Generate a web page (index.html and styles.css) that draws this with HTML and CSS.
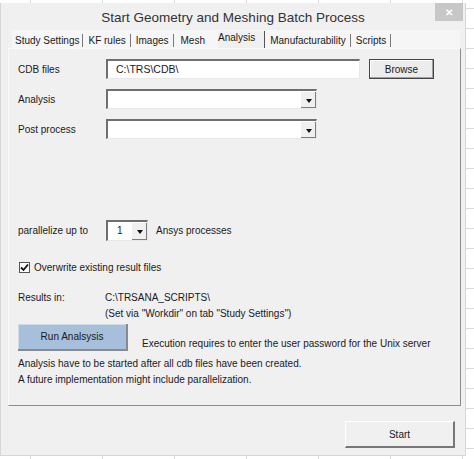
FILE: index.html
```html
<!DOCTYPE html>
<html lang="en">
<head>
    <meta charset="UTF-8">
    <title>Start Geometry and Meshing Batch Process</title>
    <link rel="stylesheet" href="styles.css">
</head>
<body>
    <div class="dialog">
        <div class="titlebar">
            <span></span>
            <span class="title">Start Geometry and Meshing Batch Process</span>
            <span class="close-wrap"><span class="close">&#x2715;</span></span>
        </div>
        <div class="tabs">
            <span class="tab">Study Settings</span>
            <span class="tab">KF rules</span>
            <span class="tab">Images</span>
            <span class="tab before-active">Mesh</span>
            <span class="tab active">Analysis</span>
            <span class="tab">Manufacturability</span>
            <span class="tab">Scripts</span>
        </div>
        <div class="page">
            <div class="row">
                <label class="lbl">CDB files</label>
                <div class="textbox">C:\TRS\CDB\</div>
                <button class="btn browse">Browse</button>
            </div>
            <div class="row gap">
                <label class="lbl">Analysis</label>
                <div class="combo wide"><span class="value"></span><span class="drop"></span></div>
            </div>
            <div class="row gap">
                <label class="lbl">Post process</label>
                <div class="combo wide"><span class="value"></span><span class="drop"></span></div>
            </div>
            <div class="row parallel">
                <label class="lbl">parallelize up to</label>
                <div class="combo small"><span class="value">1</span><span class="drop"></span></div>
                <span class="after">Ansys processes</span>
            </div>
            <div class="row check-row">
                <span class="checkbox">
                    <svg width="9" height="9" viewBox="0 0 9 9"><path d="M1 4.5 L3.5 7 L8 1.5" fill="none" stroke="#111" stroke-width="1.8"/></svg>
                </span>
                <span>Overwrite existing result files</span>
            </div>
            <div class="results">
                <span class="lbl">Results in:</span>
                <div class="paths">
                    <div>C:\TRSANA_SCRIPTS\</div>
                    <div>(Set via "Workdir" on tab "Study Settings")</div>
                </div>
            </div>
            <div class="run-row">
                <button class="btn run">Run Analsysis</button>
                <span class="hint">Execution requires to enter the user password for the Unix server</span>
            </div>
            <div class="notes">
                <div>Analysis have to be started after all cdb files have been created.</div>
                <div>A future implementation might include parallelization.</div>
            </div>
        </div>
        <div class="footer">
            <button class="btn start">Start</button>
        </div>
    </div>
</body>
</html>
```

FILE: styles.css
```css
body {
    margin: 0;
    font-family: "Liberation Sans", Arial, sans-serif;
    font-size: 10px;
    color: #1a1a1a;
    background-color: #fff;
    background-image:
        linear-gradient(#dadada 1px, transparent 1px),
        linear-gradient(90deg, #dadada 1px, transparent 1px);
    background-size: 100% 20px, 72px 100%;
    background-position: 0 8px, 30px 0;
    height: 459px;
    overflow: hidden;
}
.dialog {
    margin-top: 3px;
    width: 466px;
    height: 453px;
    box-sizing: border-box;
    background-color: #f0f0f0;
    border: 1px solid #d6d6d6;
    border-top: none;
    display: flex;
    flex-direction: column;
}
.titlebar {
    height: 27px;
    display: grid;
    grid-template-columns: 1fr auto 1fr;
    align-items: center;
}
.title {
    font-size: 13.5px;
    color: #333;
    padding-top: 1px;
}
.close-wrap {
    display: flex;
    justify-content: flex-end;
    align-self: start;
    padding-right: 2px;
}
.close {
    width: 28px;
    height: 18px;
    background-color: #c7c7c7;
    color: #fff;
    font-size: 10px;
    font-weight: bold;
    display: flex;
    align-items: center;
    justify-content: center;
}
.tabs {
    margin-left: 11px;
    margin-right: 5px;
    height: 18px;
    display: flex;
    align-items: flex-end;
    background-color: #f6f6f6;
}
.tab {
    padding: 0 4px 0 5px;
    margin-bottom: 1px;
    line-height: 13px;
    border-right: 1px solid #7a7a7a;
}
.tab:first-child {
    padding-left: 3px;
    padding-right: 3px;
}
.tab.before-active {
    border-right: none;
    padding-left: 7px;
    padding-right: 13px;
}
.tab.active {
    padding: 0 9px 3px 0;
    margin-bottom: 0;
    border-right: 1px solid #555;
    line-height: 14px;
    background-color: #f0f0f0;
}
.page {
    margin-left: 7px;
    margin-right: 4px;
    height: 358px;
    box-sizing: border-box;
    border: 1px solid #fafafa;
    border-right: 1px solid #8c8c8c;
    border-bottom: 1px solid #8c8c8c;
    padding: 10px 0 0 9px;
    display: flex;
    flex-direction: column;
}
.row {
    display: flex;
    align-items: center;
    height: 20px;
}
.row.gap {
    margin-top: 10px;
}
.lbl {
    width: 88px;
    flex-shrink: 0;
}
.textbox {
    width: 254px;
    height: 20px;
    box-sizing: border-box;
    background-color: #fff;
    border-top: 2px solid #6f6f6f;
    border-left: 2px solid #6f6f6f;
    border-right: 1px solid #e8e8e8;
    border-bottom: 1px solid #e8e8e8;
    padding-left: 8px;
    line-height: 17px;
    font-size: 10.5px;
}
.btn {
    font-family: inherit;
    font-size: 10px;
    color: #1a1a1a;
    background-color: #ececec;
    cursor: pointer;
}
.browse {
    margin-left: 9px;
    width: 65px;
    height: 20px;
    border: 1px solid #444;
    box-shadow: inset -1px -1px 0 #a0a0a0, inset 1px 1px 0 #fff;
    padding: 0;
}
.combo {
    height: 20px;
    box-sizing: border-box;
    background-color: #fff;
    border-top: 2px solid #6f6f6f;
    border-left: 2px solid #6f6f6f;
    border-right: 1px solid #e8e8e8;
    border-bottom: 1px solid #e8e8e8;
    display: flex;
}
.combo.wide {
    width: 211px;
}
.combo.small {
    width: 42px;
    height: 21px;
}
.value {
    flex: 1;
    padding-left: 9px;
    line-height: 17px;
}
.drop {
    width: 15px;
    background-color: #f0f0f0;
    border-left: 1px solid #fff;
    border-top: 1px solid #fff;
    box-shadow: inset -1px -1px 0 #7d7d7d;
    display: flex;
    align-items: center;
    justify-content: center;
}
.drop::after {
    content: "";
    border-left: 3.5px solid transparent;
    border-right: 3.5px solid transparent;
    border-top: 4px solid #111;
    margin-top: 1px;
}
.after {
    margin-left: 8px;
}
.parallel {
    margin-top: 81px;
    height: 21px;
}
.check-row {
    margin-top: 20px;
    height: 12px;
    padding-left: 1px;
}
.checkbox {
    width: 11px;
    height: 11px;
    box-sizing: border-box;
    border: 1px solid #555;
    background-color: #fff;
    display: flex;
    align-items: center;
    justify-content: center;
    margin-right: 4px;
}
.results {
    margin-top: 17px;
    display: flex;
    line-height: 16px;
}
.results .lbl {
    width: 87px;
}
.run-row {
    margin-top: 2px;
    display: flex;
    align-items: flex-end;
}
.run {
    width: 110px;
    height: 27px;
    background-color: #a6bfda;
    border: none;
    border-right: 2px solid #8a8a8a;
    border-bottom: 2px solid #8a8a8a;
    box-shadow: inset 1px 1px 0 #cbd9e8;
    padding: 0 0 1px;
}
.hint {
    margin-left: 14px;
    line-height: 14px;
}
.notes {
    margin-top: 5px;
    line-height: 16px;
}
.footer {
    flex: 1;
    display: flex;
    justify-content: flex-end;
    align-items: flex-start;
    padding: 15px 10px 0 0;
}
.start {
    width: 110px;
    height: 27px;
    background-color: #f0f0f0;
    border: none;
    border-top: 1px solid #fff;
    border-left: 1px solid #fff;
    border-right: 2px solid #777;
    border-bottom: 2px solid #777;
    padding: 0;
}
```
